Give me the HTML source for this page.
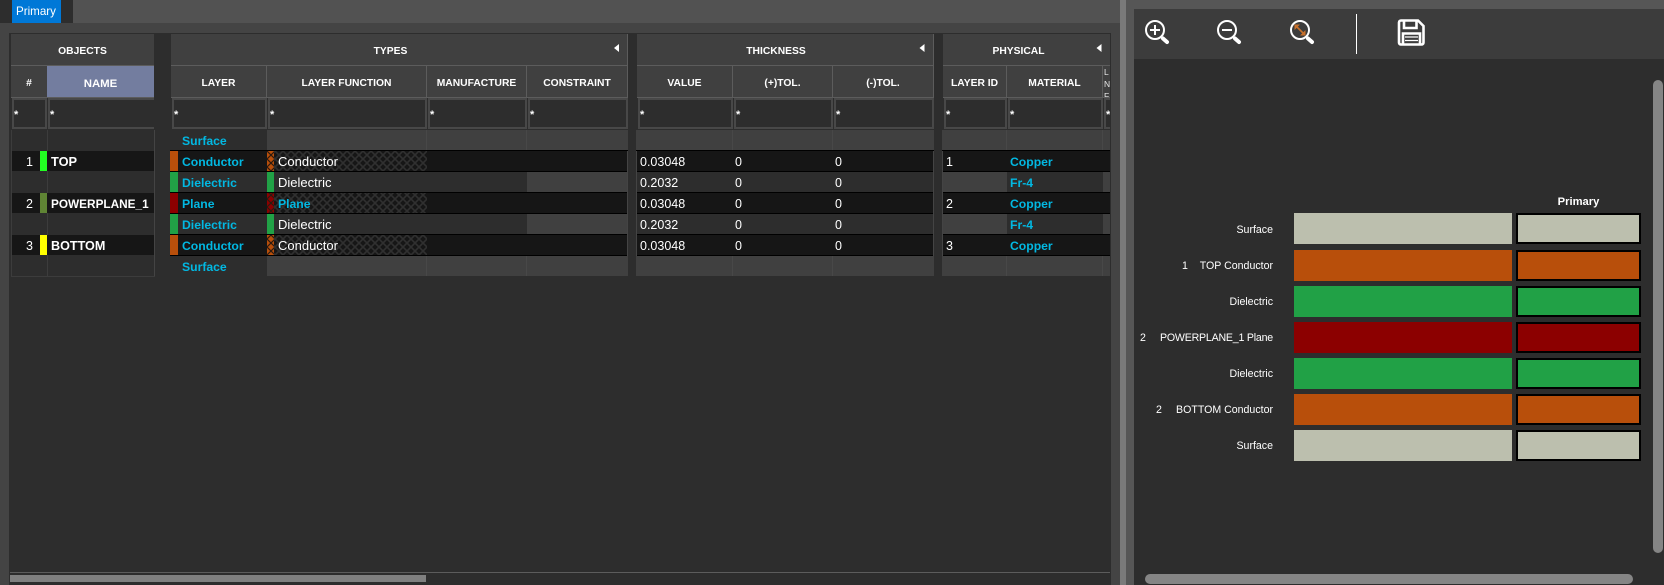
<!DOCTYPE html>
<html><head><meta charset="utf-8"><title>Primary</title>
<style>
html,body{margin:0;padding:0}
body{position:relative;width:1664px;height:585px;overflow:hidden;background:#2d2d2d;font-family:"Liberation Sans",sans-serif;color:#fff}
div{position:absolute;box-sizing:border-box}
.t{white-space:nowrap;line-height:20px;font-size:13px}
.b{font-weight:bold;font-size:12.2px;color:#02b8e2}
.v{font-size:12.5px}
.n{font-weight:bold;font-size:11.8px}
.h{background:#404040;border-right:1px solid #5c5c5c;border-bottom:1px solid #5c5c5c;height:32px;font-weight:bold;font-size:10.3px;line-height:36px;text-align:center;white-space:nowrap;overflow:hidden}
.f{background:#2d2d2d;border:2px solid #484848;top:98px;height:31px;font-size:11px;line-height:31px;padding-left:0;font-weight:bold;white-space:nowrap;overflow:hidden}
.s{height:20px}
.l{font-size:10.6px;line-height:16px;text-align:right;width:260px;left:1013px;white-space:pre}
.m{font-size:10.6px;line-height:16px;white-space:pre}
.g{background:#bcbfae}.o{background:#b84f0b}.e{background:#21a146}.r{background:#8c0000}
.bar{left:1294px;width:218px;height:31px}
.sw{left:1516px;width:125px;height:31px;border:2px solid #000}
</style></head><body>

<div style="left:0;top:0;width:1120px;height:23px;background:#525252"></div>
<div style="left:0;top:0;width:73px;height:23px;background:#2d2d2d"></div>
<div class="t" style="left:12px;top:0;width:49px;height:23px;background:#0078d7;font-size:11.6px;line-height:23px;padding-left:4px">Primary</div>
<div style="left:0;top:23px;width:1120px;height:10px;background:#444"></div>
<div style="left:0;top:33px;width:9px;height:552px;background:#444"></div>
<div style="left:1111px;top:33px;width:9px;height:552px;background:#444"></div>
<div style="left:1120px;top:0;width:6px;height:585px;background:#7a7a7a"></div>
<div style="left:1126px;top:0;width:8px;height:585px;background:#565656"></div>
<div style="left:1134px;top:0;width:530px;height:9px;background:#565656"></div>
<div style="left:1134px;top:9px;width:530px;height:50px;background:#3c3c3c"></div>

<!-- group headers -->
<div class="h" style="left:11px;top:34px;width:143px;border-right:0">OBJECTS</div>
<div class="h" style="left:171px;top:34px;width:457px;padding-right:17px">TYPES</div>
<div class="h" style="left:637px;top:34px;width:297px;padding-right:18px">THICKNESS</div>
<div class="h" style="left:943px;top:34px;width:167px;padding-right:16px;border-right:0">PHYSICAL</div>

<!-- column headers -->
<div class="h" style="left:11px;top:66px;width:36px;border-right:0">#</div>
<div class="h" style="left:47px;top:66px;width:107px;background:#737d9f;border-right:0;font-size:11.4px">NAME</div>
<div class="h" style="left:171px;top:66px;width:96px">LAYER</div>
<div class="h" style="left:267px;top:66px;width:160px">LAYER FUNCTION</div>
<div class="h" style="left:427px;top:66px;width:100px">MANUFACTURE</div>
<div class="h" style="left:527px;top:66px;width:101px">CONSTRAINT</div>
<div class="h" style="left:637px;top:66px;width:96px">VALUE</div>
<div class="h" style="left:733px;top:66px;width:100px">(+)TOL.</div>
<div class="h" style="left:833px;top:66px;width:101px">(-)TOL.</div>
<div class="h" style="left:943px;top:66px;width:64px">LAYER ID</div>
<div class="h" style="left:1007px;top:66px;width:96px">MATERIAL</div>
<div class="h" style="left:1103px;top:66px;width:7px;border-right:0;font-weight:normal;line-height:12px;text-align:left;padding:0 0 0 1px;white-space:normal;font-size:8.5px;color:#e8e8e8">L<br>N<br>F</div>

<!-- filters -->
<div class="f" style="left:12px;width:35px">*</div>
<div class="f" style="left:48px;width:106px;border-right:0">*</div>
<div class="f" style="left:172px;width:95px">*</div>
<div class="f" style="left:268px;width:159px">*</div>
<div class="f" style="left:428px;width:99px">*</div>
<div class="f" style="left:528px;width:100px">*</div>
<div class="f" style="left:638px;width:95px">*</div>
<div class="f" style="left:734px;width:99px">*</div>
<div class="f" style="left:834px;width:100px">*</div>
<div class="f" style="left:944px;width:63px">*</div>
<div class="f" style="left:1008px;width:95px">*</div>
<div class="f" style="left:1104px;width:6px;border-right:0">*</div>

<!-- surface rows -->
<div style="left:47px;top:130px;width:1px;height:147px;background:#3c3c3c"></div>
<div style="left:11px;top:130px;width:1px;height:147px;background:#3c3c3c"></div>
<div style="left:154px;top:130px;width:1px;height:147px;background:#444"></div>
<div style="left:11px;top:276px;width:144px;height:1px;background:#3c3c3c"></div>
<div style="left:267px;top:130px;width:361px;height:20px;background:#404040"></div>
<div style="left:636px;top:130px;width:298px;height:20px;background:#404040"></div>
<div style="left:942px;top:130px;width:168px;height:20px;background:#404040"></div>
<div style="left:267px;top:256px;width:361px;height:20px;background:#404040"></div>
<div style="left:636px;top:256px;width:298px;height:20px;background:#404040"></div>
<div style="left:942px;top:256px;width:168px;height:20px;background:#404040"></div>
<div style="left:426px;top:130px;width:1px;height:20px;background:#484848"></div>
<div style="left:526px;top:130px;width:1px;height:20px;background:#484848"></div>
<div style="left:732px;top:130px;width:1px;height:20px;background:#484848"></div>
<div style="left:832px;top:130px;width:1px;height:20px;background:#484848"></div>
<div style="left:1006px;top:130px;width:1px;height:20px;background:#484848"></div>
<div style="left:1102px;top:130px;width:1px;height:20px;background:#484848"></div>
<div style="left:426px;top:256px;width:1px;height:20px;background:#484848"></div>
<div style="left:526px;top:256px;width:1px;height:20px;background:#484848"></div>
<div style="left:732px;top:256px;width:1px;height:20px;background:#484848"></div>
<div style="left:832px;top:256px;width:1px;height:20px;background:#484848"></div>
<div style="left:1006px;top:256px;width:1px;height:20px;background:#484848"></div>
<div style="left:1102px;top:256px;width:1px;height:20px;background:#484848"></div>
<div style="left:170px;top:150px;width:458px;height:1px;background:#000"></div>
<div style="left:636px;top:150px;width:298px;height:1px;background:#000"></div>
<div style="left:942px;top:150px;width:168px;height:1px;background:#000"></div>
<div class="t b" style="left:182px;top:131px">Surface</div>
<div class="t b" style="left:182px;top:257px">Surface</div>

<!-- row backgrounds: dark -->
<div style="left:12px;top:151px;width:142px;height:20px;background:#161616"></div>
<div style="left:170px;top:151px;width:458px;height:20px;background:#161616"></div>
<div style="left:636px;top:151px;width:298px;height:20px;background:#161616"></div>
<div style="left:942px;top:151px;width:168px;height:20px;background:#161616"></div>
<div style="left:12px;top:193px;width:142px;height:20px;background:#161616"></div>
<div style="left:170px;top:193px;width:458px;height:20px;background:#161616"></div>
<div style="left:636px;top:193px;width:298px;height:20px;background:#161616"></div>
<div style="left:942px;top:193px;width:168px;height:20px;background:#161616"></div>
<div style="left:12px;top:235px;width:142px;height:20px;background:#161616"></div>
<div style="left:170px;top:235px;width:458px;height:20px;background:#161616"></div>
<div style="left:636px;top:235px;width:298px;height:20px;background:#161616"></div>
<div style="left:942px;top:235px;width:168px;height:20px;background:#161616"></div>

<!-- black separators -->
<div style="left:170px;top:171px;width:458px;height:1px;background:#000"></div>
<div style="left:170px;top:192px;width:458px;height:1px;background:#000"></div>
<div style="left:170px;top:213px;width:458px;height:1px;background:#000"></div>
<div style="left:170px;top:234px;width:458px;height:1px;background:#000"></div>
<div style="left:170px;top:255px;width:458px;height:1px;background:#000"></div>
<div style="left:636px;top:171px;width:298px;height:1px;background:#000"></div>
<div style="left:636px;top:192px;width:298px;height:1px;background:#000"></div>
<div style="left:636px;top:213px;width:298px;height:1px;background:#000"></div>
<div style="left:636px;top:234px;width:298px;height:1px;background:#000"></div>
<div style="left:636px;top:255px;width:298px;height:1px;background:#000"></div>
<div style="left:942px;top:171px;width:168px;height:1px;background:#000"></div>
<div style="left:942px;top:192px;width:168px;height:1px;background:#000"></div>
<div style="left:942px;top:213px;width:168px;height:1px;background:#000"></div>
<div style="left:942px;top:234px;width:168px;height:1px;background:#000"></div>
<div style="left:942px;top:255px;width:168px;height:1px;background:#000"></div>

<!-- lighter cells in dielectric rows -->
<div style="left:527px;top:172px;width:100px;height:20px;background:#404040"></div>
<div style="left:527px;top:214px;width:100px;height:20px;background:#404040"></div>
<div style="left:942px;top:172px;width:65px;height:20px;background:#404040"></div>
<div style="left:942px;top:214px;width:65px;height:20px;background:#404040"></div>
<div style="left:1103px;top:172px;width:7px;height:20px;background:#404040"></div>
<div style="left:1103px;top:214px;width:7px;height:20px;background:#404040"></div>
<div style="left:627px;top:151px;width:1px;height:105px;background:#444"></div>
<div style="left:636px;top:151px;width:1px;height:105px;background:#444"></div>
<div style="left:933px;top:151px;width:1px;height:105px;background:#444"></div>
<div style="left:942px;top:151px;width:1px;height:105px;background:#444"></div>

<!-- swatches -->
<div class="s" style="left:40px;top:151px;width:7px;background:#22ff22"></div>
<div class="s" style="left:40px;top:193px;width:7px;background:#5f8434"></div>
<div class="s" style="left:40px;top:235px;width:7px;background:#ffff00"></div>
<div class="s o" style="left:170px;top:151px;width:8px"></div>
<div class="s e" style="left:170px;top:172px;width:8px"></div>
<div class="s r" style="left:170px;top:193px;width:8px"></div>
<div class="s e" style="left:170px;top:214px;width:8px"></div>
<div class="s o" style="left:170px;top:235px;width:8px"></div>
<div class="s o" style="left:267px;top:151px;width:7px"></div>
<div class="s e" style="left:267px;top:172px;width:7px"></div>
<div class="s r" style="left:267px;top:193px;width:7px"></div>
<div class="s e" style="left:267px;top:214px;width:7px"></div>
<div class="s o" style="left:267px;top:235px;width:7px"></div>

<!-- overlay graphics -->
<svg width="1664" height="585" viewBox="0 0 1664 585" style="position:absolute;left:0;top:0">
<defs>
<pattern id="h1" width="8" height="8" patternUnits="userSpaceOnUse" patternTransform="translate(267 151)"><path d="M0 0L8 8M8 0L0 8" stroke="#303030" stroke-width="1.6" fill="none"/></pattern>
<pattern id="h2" width="8" height="8" patternUnits="userSpaceOnUse" patternTransform="translate(267 151)"><path d="M0 0L8 8M8 0L0 8" stroke="#2a1a10" stroke-width="1.2" fill="none"/></pattern>
</defs>
<rect x="274" y="151" width="153" height="20" fill="url(#h1)"/>
<rect x="274" y="193" width="153" height="20" fill="url(#h1)"/>
<rect x="274" y="235" width="153" height="20" fill="url(#h1)"/>
<rect x="267" y="151" width="7" height="20" fill="url(#h2)"/>
<rect x="267" y="193" width="7" height="20" fill="url(#h2)"/>
<rect x="267" y="235" width="7" height="20" fill="url(#h2)"/>
<path d="M619 44v8l-5-4zM924.500 44v8l-5-4zM1101.500 44v8l-5-4z" fill="#fff"/>
<g fill="none" stroke="#fff" stroke-width="2">
<circle cx="1155" cy="30" r="9"/><path d="M1150 30h10M1155 25v10"/>
<circle cx="1227" cy="30" r="9"/><path d="M1222 30h10"/>
<circle cx="1300" cy="30" r="9"/>
</g>
<g stroke="#fff" stroke-width="4" stroke-linecap="round">
<path d="M1163 38.500l4 3.500M1235 38.500l4 3.500M1308 38.500l4 3.500"/>
</g>
<path d="M1297 27l6 6" stroke="#c8702a" stroke-width="1.6"/>
<path d="M1294.500 24.500h5.500l-5.500 5.500zM1305.500 35.500h-5.500l5.500-5.500z" fill="#c8702a"/>
<path d="M1356.500 14v40" stroke="#fff" stroke-width="1"/>
<g fill="none" stroke="#fff" stroke-width="2.600">
<path d="M1401 20.500h17l5.500 5.500v16.500a2 2 0 0 1-2 2h-20.500a2 2 0 0 1-2-2v-20a2 2 0 0 1 2-2z"/>
<path d="M1404 21v7h12.500v-7"/>
<path d="M1403 44v-10.500h17v10.500"/>
</g>
<path d="M1405 37h13M1405 40.500h13" stroke="#fff" stroke-width="1.200"/>
</svg>

<!-- row text -->
<div class="t" style="left:26px;top:152px;font-size:12.5px">1</div>
<div class="t" style="left:26px;top:194px;font-size:12.5px">2</div>
<div class="t" style="left:26px;top:236px;font-size:12.5px">3</div>
<div class="t n" style="left:51px;top:152px;font-size:12.8px">TOP</div>
<div class="t n" style="left:51px;top:194px">POWERPLANE_1</div>
<div class="t n" style="left:51px;top:236px;font-size:12.6px">BOTTOM</div>

<div class="t b" style="left:182px;top:152px">Conductor</div>
<div class="t b" style="left:182px;top:173px">Dielectric</div>
<div class="t b" style="left:182px;top:194px">Plane</div>
<div class="t b" style="left:182px;top:215px">Dielectric</div>
<div class="t b" style="left:182px;top:236px">Conductor</div>

<div class="t" style="left:278px;top:152px">Conductor</div>
<div class="t" style="left:278px;top:173px">Dielectric</div>
<div class="t b" style="left:278px;top:194px">Plane</div>
<div class="t" style="left:278px;top:215px">Dielectric</div>
<div class="t" style="left:278px;top:236px">Conductor</div>

<div class="t v" style="left:640px;top:152px">0.03048</div>
<div class="t v" style="left:640px;top:173px">0.2032</div>
<div class="t v" style="left:640px;top:194px">0.03048</div>
<div class="t v" style="left:640px;top:215px">0.2032</div>
<div class="t v" style="left:640px;top:236px">0.03048</div>

<div class="t v" style="left:735px;top:152px">0</div>
<div class="t v" style="left:735px;top:173px">0</div>
<div class="t v" style="left:735px;top:194px">0</div>
<div class="t v" style="left:735px;top:215px">0</div>
<div class="t v" style="left:735px;top:236px">0</div>
<div class="t v" style="left:835px;top:152px">0</div>
<div class="t v" style="left:835px;top:173px">0</div>
<div class="t v" style="left:835px;top:194px">0</div>
<div class="t v" style="left:835px;top:215px">0</div>
<div class="t v" style="left:835px;top:236px">0</div>

<div class="t v" style="left:946px;top:152px">1</div>
<div class="t v" style="left:946px;top:194px">2</div>
<div class="t v" style="left:946px;top:236px">3</div>
<div class="t b" style="left:1010px;top:152px">Copper</div>
<div class="t b" style="left:1010px;top:173px">Fr-4</div>
<div class="t b" style="left:1010px;top:194px">Copper</div>
<div class="t b" style="left:1010px;top:215px">Fr-4</div>
<div class="t b" style="left:1010px;top:236px">Copper</div>

<!-- left scrollbar -->
<div style="left:10px;top:572px;width:1100px;height:1px;background:#5c5c5c"></div>
<div style="left:10px;top:575px;width:416px;height:7px;background:#808080"></div>

<!-- right panel -->
<div class="t" style="left:1516px;top:192px;width:125px;text-align:center;font-weight:bold;font-size:11.2px">Primary</div>
<div class="l" style="top:222px">Surface</div>
<div class="m" style="left:1182px;top:258px">1</div>
<div class="l" style="top:258px">TOP Conductor</div>
<div class="l" style="top:294px">Dielectric</div>
<div class="m" style="left:1140px;top:330px">2</div>
<div class="l" style="top:330px;letter-spacing:-.2px">POWERPLANE_1 Plane</div>
<div class="l" style="top:366px">Dielectric</div>
<div class="m" style="left:1156px;top:402px">2</div>
<div class="l" style="top:402px">BOTTOM Conductor</div>
<div class="l" style="top:438px">Surface</div>

<div class="bar g" style="top:213px"></div><div class="sw g" style="top:213px"></div>
<div class="bar o" style="top:250px"></div><div class="sw o" style="top:250px"></div>
<div class="bar e" style="top:286px"></div><div class="sw e" style="top:286px"></div>
<div class="bar r" style="top:322px"></div><div class="sw r" style="top:322px"></div>
<div class="bar e" style="top:358px"></div><div class="sw e" style="top:358px"></div>
<div class="bar o" style="top:394px"></div><div class="sw o" style="top:394px"></div>
<div class="bar g" style="top:430px"></div><div class="sw g" style="top:430px"></div>

<div style="left:1653px;top:80px;width:10px;height:473px;background:#858585;border-radius:5px"></div>
<div style="left:1145px;top:574px;width:488px;height:10px;background:#858585;border-radius:5px"></div>
</body></html>
